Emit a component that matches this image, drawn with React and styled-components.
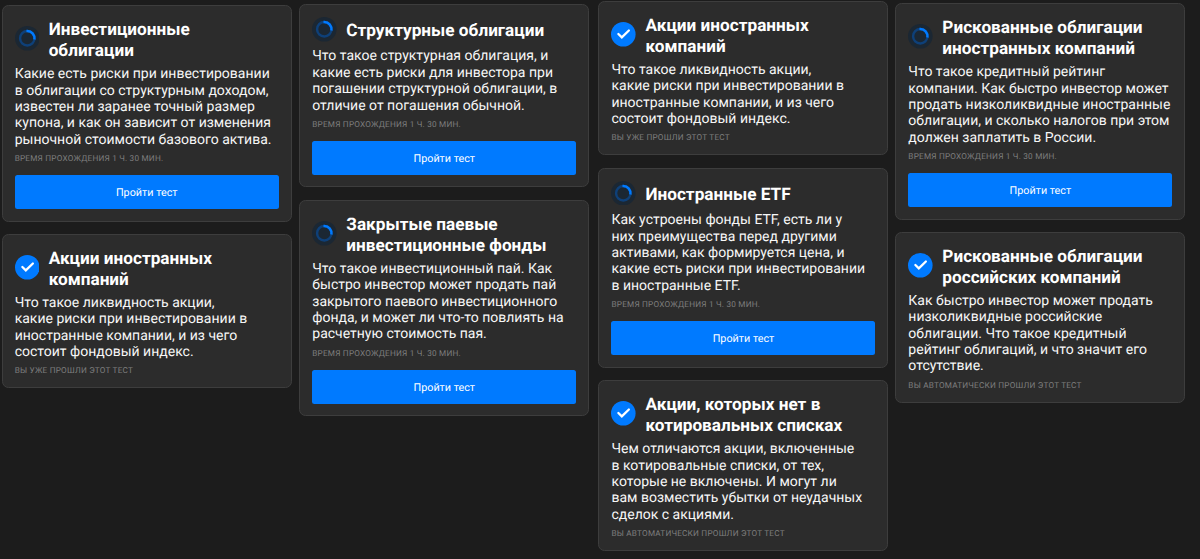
import React from "react";
import styled, { createGlobalStyle } from "styled-components";

const colors = {
  page: "#1c1c1c",
  card: "#2c2c2c",
  border: "#3d3d3d",
  blue: "#007aff",
  white: "#f7f7f7",
  muted: "#7e7e7e",
};

const GlobalStyle = createGlobalStyle`
  * {
    box-sizing: border-box;
  }
  body {
    margin: 0;
    background: ${colors.page};
    font-family: Roboto, "Noto Sans", sans-serif;
    text-rendering: geometricPrecision;
    overflow: hidden;
  }
`;

const Board = styled.main`
  display: grid;
  grid-template-columns: 297.6px 299.2px 296.9px 290px;
  align-items: start;
  height: 559px;
  padding-left: 1.7px;
`;
const Column = styled.section`
  display: flex;
  flex-direction: column;
  gap: 12.4px;
  width: 290px;
  padding-top: ${({ $top }) => $top}px;
`;
const Card = styled.article`
  padding: 12px 12px 11.8px;
  background: ${colors.card};
  border: 1px solid ${colors.border};
  border-radius: 6.5px;
`;
const Header = styled.header`
  display: flex;
  align-items: center;
  gap: 9.4px;
`;
const StatusIcon = styled.svg`
  flex: none;
  width: 24.6px;
  height: 24.6px;
`;
const Title = styled.h2`
  margin: 0 0 -2.1px;
  padding-top: 2.1px;
  font-size: 17.2px;
  font-weight: 700;
  line-height: 20.7px;
  white-space: pre;
  color: #fff;
`;
const Description = styled.p`
  margin: 6.8px 0 0;
  font-size: 14px;
  line-height: 16.35px;
  white-space: pre;
  color: ${colors.white};
`;
const Note = styled.div`
  margin: 6px 0 -0.8px;
  font-size: 8.2px;
  line-height: 10px;
  letter-spacing: 0.21px;
  text-transform: uppercase;
  white-space: nowrap;
  color: ${colors.muted};
`;
const StartButton = styled.button`
  display: block;
  width: 100%;
  height: 33.6px;
  margin-top: 12px;
  padding: 1px 0 0;
  border: 0;
  border-radius: 2.5px;
  background: ${colors.blue};
  font-family: inherit;
  font-size: 10.8px;
  text-rendering: inherit;
  color: #fff;
`;

const TIME = "Время прохождения 1 ч. 30 мин.";
const PASSED = "Вы уже прошли этот тест";
const AUTO = "Вы автоматически прошли этот тест";

const foreignStocks = {
  title: "Акции иностранных\nкомпаний",
  text: "Что такое ликвидность акции,\nкакие риски при инвестировании в\nиностранные компании, и из чего\nсостоит фондовый индекс.",
  note: PASSED,
  done: true,
};

const columns = [
  {
    top: 5,
    cards: [
      {
        title: "Инвестиционные\nоблигации",
        text: "Какие есть риски при инвестировании\nв облигации со структурным доходом,\nизвестен ли заранее точный размер\nкупона, и как он зависит от изменения\nрыночной стоимости базового актива.",
        note: TIME,
      },
      foreignStocks,
    ],
  },
  {
    top: 4.1,
    cards: [
      {
        title: "Структурные облигации",
        text: "Что такое структурная облигация, и\nкакие есть риски для инвестора при\nпогашении структурной облигации, в\nотличие от погашения обычной.",
        note: TIME,
      },
      {
        title: "Закрытые паевые\nинвестиционные фонды",
        text: "Что такое инвестиционный пай. Как\nбыстро инвестор может продать пай\nзакрытого паевого инвестиционного\nфонда, и может ли что-то повлиять на\nрасчетную стоимость пая.",
        note: TIME,
      },
    ],
  },
  {
    top: 0.9,
    cards: [
      foreignStocks,
      {
        title: "Иностранные ETF",
        text: "Как устроены фонды ETF, есть ли у\nних преимущества перед другими\nактивами, как формируется цена, и\nкакие есть риски при инвестировании\nв иностранные ETF.",
        note: TIME,
      },
      {
        title: "Акции, которых нет в\nкотировальных списках",
        text: "Чем отличаются акции, включенные\nв котировальные списки, от тех,\nкоторые не включены. И могут ли\nвам возместить убытки от неудачных\nсделок с акциями.",
        note: AUTO,
        done: true,
      },
    ],
  },
  {
    top: 3,
    cards: [
      {
        title: "Рискованные облигации\nиностранных компаний",
        text: "Что такое кредитный рейтинг\nкомпании. Как быстро инвестор может\nпродать низколиквидные иностранные\nоблигации, и сколько налогов при этом\nдолжен заплатить в России.",
        note: TIME,
      },
      {
        title: "Рискованные облигации\nроссийских компаний",
        text: "Как быстро инвестор может продать\nнизколиквидные российские\nоблигации. Что такое кредитный\nрейтинг облигаций, и что значит его\nотсутствие.",
        note: AUTO,
        done: true,
      },
    ],
  },
];

const DoneIcon = () => (
  <StatusIcon viewBox="0 0 30 30">
    <circle cx="15" cy="15" r="15" fill={colors.blue} />
    <path
      d="M9 14.6l4.2 4.2 8.6-8.4"
      fill="none"
      stroke="#fff"
      strokeWidth="2.8"
      strokeLinecap="round"
    />
  </StatusIcon>
);

const ProgressIcon = () => (
  <StatusIcon viewBox="0 0 30 30">
    <circle cx="15" cy="15" r="15" fill="#1b2733" />
    <circle cx="15" cy="15" r="8.8" fill="none" stroke="#0e4079" strokeWidth="3" />
    <path d="M14 6.2h1a8.8 8.8 0 0 1 8.7 10.2" fill="none" stroke={colors.blue} strokeWidth="3" />
  </StatusIcon>
);

const TestCard = ({ title, text, note, done }) => (
  <Card>
    <Header>
      {done ? <DoneIcon /> : <ProgressIcon />}
      <Title>{title}</Title>
    </Header>
    <Description>{text}</Description>
    <Note>{note}</Note>
    {note === TIME && <StartButton type="button">Пройти тест</StartButton>}
  </Card>
);

const App = () => (
  <>
    <GlobalStyle />
    <Board>
      {columns.map(({ top, cards }, i) => (
        <Column key={i} $top={top}>
          {cards.map((card) => (
            <TestCard key={card.title} {...card} />
          ))}
        </Column>
      ))}
    </Board>
  </>
);

export default App;
